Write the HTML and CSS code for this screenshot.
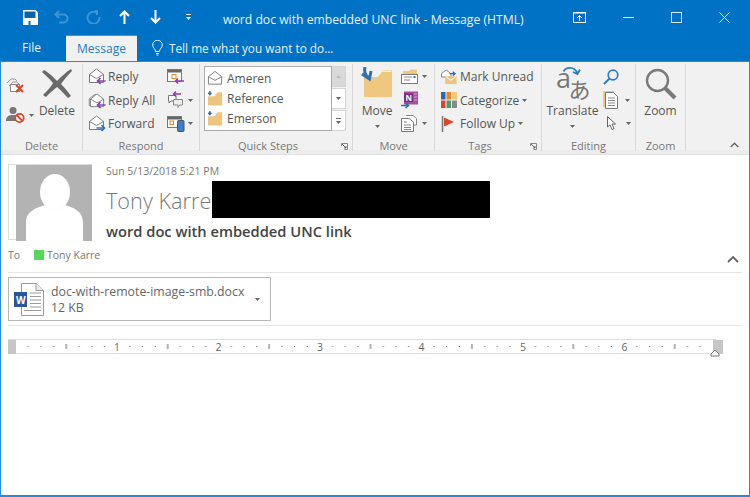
FILE: index.html
```html
<!DOCTYPE html>
<html lang="en">
<head>
<meta charset="utf-8">
<title>word doc with embedded UNC link - Message (HTML)</title>
<link rel="stylesheet" href="styles.css">
</head>
<body>
<svg class="defs" width="0" height="0" aria-hidden="true">
  <defs>
    <symbol id="env" viewBox="0 0 18 17">
      <path d="M1.5 6.5 8.5 1 15.5 6.5V14.500H1.5Z" fill="#fff" stroke="#7b7b7b"/>
      <path d="M1.5 6.5 8.5 10.500 15.5 6.5" fill="none" stroke="#7b7b7b"/>
    </symbol>
    <symbol id="folder" viewBox="0 0 18 17">
      <path d="M1 6H8L11 2H16V16H1Z" fill="#edc57e"/>
      <path d="M3 0.5V4M1.3 2.5 3 4.500 4.700 2.500" fill="none" stroke="#2f6fb3" stroke-width="1.500"/>
    </symbol>
    <symbol id="arrow-purple" viewBox="0 0 10 8">
      <path d="M9.500 4H1.500M4.500 1 1.500 4 4.500 7" fill="none" stroke="#8b3fb0" stroke-width="1.600"/>
    </symbol>
    <symbol id="caret" viewBox="0 0 5 3">
      <path d="M0 0H5L2.500 3Z" fill="#666"/>
    </symbol>
    <symbol id="launcher" viewBox="0 0 7 7">
      <path d="M.5 3V.5H6.500V6.500H3.500" fill="none" stroke="#888"/>
      <path d="M1 1 5 5M3 5H5V3" fill="none" stroke="#666"/>
    </symbol>
    <pattern id="marks" x="15.600" y="0" width="101.400" height="15" patternUnits="userSpaceOnUse">
      <rect x="12.300" y="7" width="1" height="1" fill="#666"/>
      <rect x="25" y="7" width="1" height="1" fill="#666"/>
      <rect x="37.700" y="7" width="1" height="1" fill="#666"/>
      <rect x="50.200" y="5" width="1" height="5" fill="#666"/>
      <rect x="63" y="7" width="1" height="1" fill="#666"/>
      <rect x="75.700" y="7" width="1" height="1" fill="#666"/>
      <rect x="88.300" y="7" width="1" height="1" fill="#666"/>
    </pattern>
  </defs>
</svg>
<div class="window">
  <header class="titlebar">
    <div class="qat">
      <svg class="qat-save" width="15" height="15" viewBox="0 0 15 15"><path d="M0 0H12.500L15 2.500V15H0Z" fill="#fff"/><rect x="1.500" y="1.500" width="11" height="6.500" fill="#0b62a8"/><rect x="5.500" y="11" width="2" height="4" fill="#0072c6"/></svg>
      <svg class="qat-dim" width="15" height="14" viewBox="0 0 15 14"><path d="M5 1 1.500 4.500 5 8M2 4.500H9.500A4 4 0 0 1 9.500 12.500H5" fill="none" stroke="#3f93d2" stroke-width="2"/></svg>
      <svg class="qat-dim" width="15" height="14" viewBox="0 0 15 14"><path d="M10.500 2.500A6 6 0 1 0 13.500 7" fill="none" stroke="#3f93d2" stroke-width="2"/><path d="M9 1H11V5" fill="none" stroke="#3f93d2" stroke-width="2"/></svg>
      <svg class="qat-arrow" width="11" height="14" viewBox="0 0 11 14"><path d="M5.500 14V2M1 6 5.500 1.500 10 6" fill="none" stroke="#fff" stroke-width="2"/></svg>
      <svg class="qat-arrow" width="11" height="14" viewBox="0 0 11 14"><path d="M5.500 0V12M1 8 5.500 12.500 10 8" fill="none" stroke="#fff" stroke-width="2"/></svg>
      <svg class="qat-more" width="5" height="6" viewBox="0 0 5 6"><path d="M0 .5H5" stroke="#fff"/><path d="M0 3H5L2.500 6Z" fill="#fff"/></svg>
    </div>
    <div class="title">word doc with embedded UNC link - Message (HTML)</div>
    <div class="winctl">
      <svg width="13" height="11" viewBox="0 0 13 11"><rect x=".5" y=".5" width="12" height="10" fill="none" stroke="#fff"/><path d="M0 .5H13" stroke="#fff" stroke-width="2"/><path d="M6.500 9V3.500M4 6 6.500 3.500 9 6" fill="none" stroke="#fff"/></svg>
      <svg width="11" height="11" viewBox="0 0 11 11"><path d="M0 5.500H11" stroke="#dcecf8"/></svg>
      <svg width="11" height="11" viewBox="0 0 11 11"><rect x=".5" y=".5" width="10" height="10" fill="none" stroke="#dcecf8"/></svg>
      <svg width="11" height="11" viewBox="0 0 11 11"><path d="M.5 .5 10.500 10.500M10.500 .5 .5 10.500" stroke="#dcecf8"/></svg>
    </div>
  </header>
  <nav class="tabs">
    <span class="tab">File</span>
    <span class="tab tab-active">Message</span>
    <span class="tell">
      <svg width="11" height="16" viewBox="0 0 11 16"><path d="M3.500 11.500C3.500 8.500 .7 8 .7 5A4.800 4.800 0 0 1 10.300 5C10.300 8 7.500 8.500 7.500 11.500ZM4 13.500H7M4.500 15H6.500" fill="none" stroke="#e8f2fa"/></svg>
      Tell me what you want to do...
    </span>
  </nav>

  <section class="ribbon">
    <div class="group g-delete">
      <div class="group-body">
        <div class="col-icons">
          <svg width="18" height="16" viewBox="0 0 18 16"><path d="M1 6 5 2H9L11 4M3 9 7 5H11L13 7" fill="none" stroke="#999"/><rect x="4.500" y="7.500" width="9" height="7" fill="#fff" stroke="#888"/><path d="M10 8 17 15M17 8 10 15" stroke="#d9472b" stroke-width="2"/></svg>
          <span class="with-caret">
            <svg width="20" height="18" viewBox="0 0 20 18"><circle cx="7" cy="4.500" r="3.500" fill="#777"/><path d="M0 15C0 10 3 9 7 9S12 10 12 15Z" fill="#777"/><circle cx="13.500" cy="12" r="4.200" fill="#fff" stroke="#d9472b" stroke-width="1.800"/><path d="M10.500 9 16.500 15" stroke="#d9472b" stroke-width="1.800"/></svg>
            <svg class="caret" width="5" height="3"><use href="#caret"/></svg>
          </span>
        </div>
        <div class="big big-delete">
          <svg width="32" height="30" viewBox="0 0 32 30"><path d="M3 2C10 6 14 11 16 13 20 9 25 4 30 1L31 3C26 8 22 13 20 16 24 20 27 24 30 28L27 30C23 26 20 22 16 19 12 22 8 26 5 29L2 27C6 23 10 19 12 15 9 11 5 8 1 4Z" fill="#6a6a6a"/></svg>
          <span>Delete</span>
        </div>
      </div>
      <div class="group-label">Delete</div>
    </div>

    <div class="group g-respond">
      <div class="group-body">
        <div class="col-rows col-respond">
          <div class="row"><span class="ic"><svg width="18" height="17"><use href="#env"/></svg><svg class="ic-arrow" width="10" height="8"><use href="#arrow-purple"/></svg></span>Reply</div>
          <div class="row"><span class="ic"><svg class="ic-back" width="15" height="15"><use href="#env"/></svg><svg class="ic-front" width="17" height="16"><use href="#env"/></svg><svg class="ic-arrow" width="10" height="8"><use href="#arrow-purple"/></svg></span>Reply All</div>
          <div class="row"><span class="ic"><svg width="18" height="17"><use href="#env"/></svg><svg class="ic-arrow" width="10" height="8" viewBox="0 0 10 8"><path d="M.5 4H8.500M5.500 1 8.500 4 5.500 7" fill="none" stroke="#2f6fb3" stroke-width="1.600"/></svg></span>Forward</div>
        </div>
        <div class="col-rows">
          <div class="row"><svg width="18" height="16" viewBox="0 0 18 16"><rect x=".5" y=".5" width="14" height="12" fill="#fff" stroke="#777"/><rect x="1" y="1" width="13" height="2.500" fill="#666"/><rect x="5" y="5.500" width="4" height="4" fill="#fff" stroke="#e8862c"/><path d="M17 12H8.500M11 9.500 8.500 12 11 14.500" fill="none" stroke="#8b3fb0" stroke-width="1.500"/></svg></div>
          <div class="row"><svg width="18" height="18" viewBox="0 0 18 18"><path d="M1.500 4.500H9V10H4L2 12V10H1.500Z" fill="#fff" stroke="#777"/><path d="M6.500 8.500H15.500V14H12.500L11 16.500V14H6.500Z" fill="#eee" stroke="#888"/><path d="M14 3H6.500M9 .5 6.500 3 9 5.500" fill="none" stroke="#8b3fb0" stroke-width="1.500"/></svg><svg class="caret" width="5" height="3"><use href="#caret"/></svg></div>
          <div class="row"><svg width="18" height="16" viewBox="0 0 18 16"><rect x=".5" y=".5" width="14" height="11" fill="#fff" stroke="#777"/><rect x="1" y="1" width="13" height="2.500" fill="#666"/><rect x="3" y="5" width="3.500" height="3.500" fill="#fff" stroke="#e8862c"/><rect x="10.500" y="4.500" width="6.500" height="11" rx="1" fill="#3b7fc4" stroke="#555"/></svg><svg class="caret" width="5" height="3"><use href="#caret"/></svg></div>
        </div>
      </div>
      <div class="group-label">Respond</div>
    </div>

    <div class="group g-quick">
      <div class="group-body">
        <div class="qs">
          <div class="qs-list">
            <div class="qs-item"><svg width="17" height="17"><use href="#env"/></svg>Ameren</div>
            <div class="qs-item"><svg width="17" height="17"><use href="#folder"/></svg>Reference</div>
            <div class="qs-item"><svg width="17" height="17"><use href="#folder"/></svg>Emerson</div>
          </div>
          <div class="qs-scroll">
            <span class="qs-up"><svg width="5" height="3" viewBox="0 0 5 3"><path d="M0 3H5L2.500 0Z" fill="#bbb"/></svg></span>
            <span class="qs-down"><svg width="5" height="3"><use href="#caret"/></svg></span>
            <span class="qs-more"><svg width="5" height="6" viewBox="0 0 5 6"><path d="M0 .5H5" stroke="#666"/><path d="M0 3H5L2.500 6Z" fill="#666"/></svg></span>
          </div>
        </div>
      </div>
      <div class="group-label has-launcher">Quick Steps<svg class="launcher" width="7" height="7"><use href="#launcher"/></svg></div>
    </div>

    <div class="group g-move">
      <div class="group-body">
        <div class="big big-move">
          <svg width="32" height="30" viewBox="0 0 32 30"><path d="M3 10H17L22 3H31V30H3Z" fill="#efc77f"/><path d="M22 3.500H30.500V5H21Z" fill="#fbf1dd"/><path d="M4 0C3 4 4 8 8 11M1 7 8.500 12 10 4" fill="none" stroke="#2f6fb3" stroke-width="3"/></svg>
          <span>Move</span>
          <svg class="caret big-caret" width="5" height="3"><use href="#caret"/></svg>
        </div>
        <div class="col-rows">
          <div class="row"><svg width="18" height="16" viewBox="0 0 18 16"><path d="M2 2H8L10 0.500H16V5H2Z" fill="#efc77f"/><rect x=".5" y="5.500" width="16" height="9" fill="#fff" stroke="#777"/><path d="M3 8H11M3 11H9" stroke="#888"/><rect x="12.500" y="7" width="2" height="2" fill="#2f6fb3"/></svg><svg class="caret" width="5" height="3"><use href="#caret"/></svg></div>
          <div class="row"><svg width="18" height="18" viewBox="0 0 18 18"><rect x="3" y=".5" width="14" height="13" fill="#a64fa0"/><rect x="3" y="2.500" width="9" height="8.500" fill="#7b2a83"/><text class="onenote" x="4.500" y="9.800">N</text><path d="M13 3H16M13 6H16M13 9H16" stroke="#d9a6d4"/><path d="M0 14.500H7M4.500 12 7.500 14.500 4.500 17" fill="none" stroke="#2f6fb3" stroke-width="1.600"/></svg></div>
          <div class="row"><svg width="18" height="17" viewBox="0 0 18 17"><path d="M5 .5H12L15.500 3.500V10H13" fill="#fff" stroke="#888"/><path d="M.5 3.500H8L12.500 7V16.500H.5Z" fill="#fff" stroke="#777"/><path d="M3 7H6M3 10H10M3 12.500H10M3 14.500H10" stroke="#888"/></svg><svg class="caret" width="5" height="3"><use href="#caret"/></svg></div>
        </div>
      </div>
      <div class="group-label">Move</div>
    </div>

    <div class="group g-tags">
      <div class="group-body">
        <div class="col-rows col-tags">
          <div class="row"><svg width="16" height="16" viewBox="0 0 17 16"><path d="M.5 4.500 5.500 .5 10.500 4.500V8H.5Z" fill="#fff" stroke="#7b7b7b"/><rect x="4.500" y="7" width="12" height="8.500" fill="#edc57e"/><path d="M5 7.500 10.500 11.500 16 7.500" fill="none" stroke="#fff"/><path d="M9 4.500H14.500M12.500 2.500 15 4.500 12.500 6.500" fill="none" stroke="#2f6fb3" stroke-width="1.400"/></svg>Mark Unread</div>
          <div class="row"><svg width="16" height="16" viewBox="0 0 16 16"><rect width="4.500" height="7.500" fill="#2e68ad"/><rect x="5.500" width="4.500" height="7.500" fill="#e8862c"/><rect x="11" width="5" height="7.500" fill="#efc77f"/><rect y="8.500" width="4.500" height="7.500" fill="#d9472b"/><rect x="5.500" y="8.500" width="4.500" height="7.500" fill="#4f9a6b"/><rect x="11" y="8.500" width="5" height="7.500" fill="#8a8a8a"/></svg>Categorize<svg class="caret" width="5" height="3"><use href="#caret"/></svg></div>
          <div class="row"><svg width="16" height="16" viewBox="0 0 16 16"><path d="M1.500 0V16" stroke="#777" stroke-width="1.500"/><path d="M3 1.500 13 6 3 10.500Z" fill="#d9472b"/></svg>Follow Up<svg class="caret" width="5" height="3"><use href="#caret"/></svg></div>
        </div>
      </div>
      <div class="group-label has-launcher">Tags<svg class="launcher" width="7" height="7"><use href="#launcher"/></svg></div>
    </div>

    <div class="group g-edit">
      <div class="group-body">
        <div class="big big-translate">
          <svg class="translate-ic" width="36" height="34" viewBox="0 0 36 34"><text class="tr-a" x="0" y="22">a</text><text class="tr-j" x="12.500" y="32">あ</text><path d="M7.500 5.500C10 .8 18 0 21.500 7M24 3.500 21.500 8 17 6" fill="none" stroke="#2f7cc4" stroke-width="1.800"/></svg>
          <span>Translate</span>
          <svg class="caret big-caret" width="5" height="3"><use href="#caret"/></svg>
        </div>
        <div class="col-rows col-edit">
          <div class="row"><svg width="16" height="16" viewBox="0 0 16 16"><circle cx="10" cy="6" r="4.800" fill="none" stroke="#2f7cc4" stroke-width="1.700"/><path d="M6.500 9.500 1 15" stroke="#2f7cc4" stroke-width="2"/></svg></div>
          <div class="row"><svg width="16" height="18" viewBox="0 0 16 18"><rect x="0" y="0" width="11" height="16" fill="#efc77f"/><path d="M2.500 1.500H10.500L14.500 5.500V17.500H2.500Z" fill="#fff" stroke="#777"/><path d="M5 7H12M5 9.500H12M5 12H12M5 14.500H12" stroke="#888"/></svg><svg class="caret" width="5" height="3"><use href="#caret"/></svg></div>
          <div class="row"><svg class="cursor-ic" width="16" height="15" viewBox="0 0 16 15"><path d="M3.500 .5V11L6 8.800 8 13.500 10 12.500 8 8H11.500Z" fill="#fff" stroke="#666"/></svg><svg class="caret" width="5" height="3"><use href="#caret"/></svg></div>
        </div>
      </div>
      <div class="group-label">Editing</div>
    </div>

    <div class="group g-zoom">
      <div class="group-body">
        <div class="big big-zoom">
          <svg width="32" height="32" viewBox="0 0 32 32"><circle cx="12.500" cy="12.500" r="10.500" fill="none" stroke="#7a7a7a" stroke-width="2.400"/><path d="M20 20 30 30" stroke="#7a7a7a" stroke-width="4"/></svg>
          <span>Zoom</span>
        </div>
      </div>
      <div class="group-label">Zoom</div>
    </div>

    <div class="collapse"><svg width="9" height="6" viewBox="0 0 9 6"><path d="M.7 5 4.500 1.300 8.300 5" fill="none" stroke="#666" stroke-width="1.400"/></svg></div>
  </section>

  <main class="message">
    <div class="msg-head">
      <div class="avatar">
        <svg width="76" height="76" viewBox="0 0 76 76"><rect width="76" height="76" fill="#b3b3b3"/><ellipse cx="39" cy="27" rx="15" ry="18" fill="#fff"/><path d="M10 76V58C10 46 20 43 29 40 34 46 44 46 49 40 58 43 67 46 67 58V76Z" fill="#fff"/></svg>
      </div>
      <div class="msg-meta">
        <div class="msg-date">Sun 5/13/2018 5:21 PM</div>
        <div class="msg-from"><span class="msg-name">Tony Karre</span><span class="redact"></span></div>
        <div class="msg-subject">word doc with embedded UNC link</div>
      </div>
    </div>
    <div class="msg-to">
      <span class="to-label">To</span>
      <span class="presence"></span>
      <span>Tony Karre</span>
      <svg class="to-chevron" width="12" height="8" viewBox="0 0 12 8"><path d="M1 7 6 2 11 7" fill="none" stroke="#666" stroke-width="1.800"/></svg>
    </div>
    <div class="attach-bar">
      <div class="attach">
        <svg width="30" height="33" viewBox="0 0 30 33"><path d="M7.500 .5H22L29.500 7.500V32.500H7.500Z" fill="#fff" stroke="#999"/><path d="M22 .5V7.500H29.500" fill="#eee" stroke="#999"/><path d="M16 10H27M16 13.500H27M16 17H27M16 20.500H27M16 24H27M10 27.500H27" stroke="#999"/><rect y="9" width="13" height="15" fill="#2b579a"/><text class="word-w" x="2" y="20.500">W</text></svg>
        <div class="attach-text">
          <div class="attach-name">doc-with-remote-image-smb.docx</div>
          <div class="attach-size">12 KB</div>
        </div>
        <svg class="caret attach-caret" width="5" height="3"><use href="#caret"/></svg>
      </div>
    </div>
    <svg class="ruler" width="716" height="17" viewBox="8 0 716 17" role="img" aria-label="Ruler">
      <rect x="8" y="1" width="708" height="14" fill="#fff"/>
      <path d="M8 .5H716M8 14.500H716" stroke="#dcdcdc"/>
      <rect x="8" y="1" width="8" height="14" fill="#c6c6c6"/>
      <rect x="16" y="0" width="690" height="15" fill="url(#marks)"/>
      <g class="ruler-num">
        <text x="117" y="11.500">1</text><text x="218.500" y="11.500">2</text><text x="320" y="11.500">3</text>
        <text x="421.500" y="11.500">4</text><text x="523" y="11.500">5</text><text x="624.500" y="11.500">6</text>
      </g>
      <rect x="713" y="1" width="10" height="14" fill="#c6c6c6"/>
      <path d="M715 11 719 15V17H711V15Z" fill="#fff" stroke="#777"/>
    </svg>
  </main>
</div>
</body>
</html>
```
FILE: styles.css
```css
* { box-sizing: border-box; }
html, body { margin: 0; padding: 0; }
body {
  width: 750px;
  height: 497px;
  overflow: hidden;
  background: #fff;
  font-family: "Open Sans", "Noto Sans", sans-serif;
  color: #555;
}
.defs { position: absolute; }
svg { display: block; flex: none; }

.window {
  width: 750px;
  height: 497px;
  display: flex;
  flex-direction: column;
  border: 1px solid #2a8ad8;
  border-top: 0;
  border-bottom-width: 2px;
}

.titlebar {
  height: 35px;
  margin: 0 -1px;
  background: #0072c6;
  display: flex;
  color: #eaf3fb;
}
.qat {
  width: 223px;
  padding: 10px 0 0 23px;
  display: flex;
  align-items: flex-start;
}
.qat-dim { margin-left: 16px; }
.qat-dim + .qat-dim { margin-left: 17px; }
.qat-arrow { margin-left: 18px; }
.qat-arrow + .qat-arrow { margin-left: 20px; }
.qat-more { margin: 4px 0 0 25px; }
.title { flex: 1; font-size: 12.200px; line-height: 39px; white-space: nowrap; }
.winctl {
  display: flex;
  gap: 37px;
  padding: 12px 20px 0 0;
  align-items: flex-start;
}

.tabs {
  height: 26px;
  margin: 0 -1px;
  background: #0072c6;
  display: flex;
  align-items: stretch;
  font-size: 12px;
  color: #e8f2fa;
  line-height: 26px;
}
.tab { padding: 0 25px 0 22px; }
.tab-active {
  width: 71px;
  padding: 0;
  text-align: center;
  background: #f1f1f1;
  color: #1c7cc8;
  border-top: 1px solid #3e97d8;
}
.tell { margin-left: 15px; display: flex; align-items: center; gap: 6px; font-size: 11.800px; }

.ribbon {
  height: 94px;
  background: #f1f1f1;
  border-top: 1px solid #2a8ad8;
  border-bottom: 1px solid #e2e2e2;
  box-shadow: inset 0 -4px 0 #ececec;
  display: flex;
  padding-top: 2px;
  font-size: 12px;
  color: #555;
  position: relative;
}
.group {
  height: 87px;
  display: flex;
  flex-direction: column;
  border-right: 1px solid #d8d8d8;
  position: relative;
}
.group-body { flex: 1; display: flex; min-height: 0; }
.group-label {
  height: 12px;
  line-height: 13px;
  text-align: center;
  font-size: 11px;
  color: #777;
}
.has-launcher { padding-right: 16px; }
.launcher { position: absolute; right: 4px; bottom: 1px; }
.g-delete { width: 82px; }
.g-respond { width: 117px; }
.g-quick { width: 153px; }
.g-move { width: 82px; }
.g-tags { width: 107px; }
.g-edit { width: 94px; }
.g-zoom { width: 50px; }

.caret { flex: none; margin-left: 3px; }

.col-icons {
  width: 36px;
  padding: 13px 0 0 5px;
  display: flex;
  flex-direction: column;
  gap: 13px;
}
.with-caret { display: flex; align-items: center; gap: 2px; }
.with-caret .caret { margin-left: 1px; }

.big { display: flex; flex-direction: column; align-items: center; line-height: 16px; }
.big-delete { padding-top: 4px; width: 40px; }
.big-delete span { margin-top: 5px; }
.big-move { width: 48px; padding-top: 3px; }
.big-move span { margin-top: 6px; }
.big-caret { margin: 6px 0 0; }
.big-translate { width: 59px; margin-left: 1px; padding-top: 2px; }
.big-translate span { margin-top: 3px; }
.translate-ic { margin-left: 2px; overflow: visible; }
.big-zoom { width: 50px; padding-top: 4px; }
.big-zoom span { margin-top: 3px; }

.col-rows { display: flex; flex-direction: column; padding-top: 1px; }
.row { height: 23.500px; display: flex; align-items: center; white-space: nowrap; }
.col-respond { width: 84px; padding-left: 5px; }
.col-tags { padding-left: 6px; }
.col-tags .row > svg:first-child { margin-right: 3px; }
.col-edit { padding-left: 1px; }
.col-edit .caret { margin-left: 6px; }
.cursor-ic { margin-left: 1px; }
.ic { position: relative; display: block; width: 18px; height: 17px; margin-right: 2px; }
.ic-arrow { position: absolute; left: 8px; bottom: 0; }
.ic-back { position: absolute; left: 0; top: 1px; }
.ic-front { position: absolute; left: 1px; top: 1px; }

.qs { display: flex; margin: 2px 0 0 4px; height: 65px; width: 142px; }
.qs-list {
  width: 128px;
  background: #fff;
  border: 1px solid #ababab;
  padding: 1px 0 0 2px;
}
.qs-item { height: 20.300px; display: flex; align-items: center; gap: 3px; }
.qs-scroll { width: 14px; display: flex; flex-direction: column; gap: 1px; }
.qs-scroll span { display: flex; align-items: center; justify-content: center; flex: 1; background: #fff; border: 1px solid #d4d4d4; border-left: 0; }
.qs-scroll .qs-up { background: #d9d9d9; }

.collapse { position: absolute; right: 10px; bottom: 6px; }

.message { flex: 1; padding: 0 7px; position: relative; }
.msg-head { display: flex; padding-top: 9px; height: 88px; }
.avatar { width: 84px; height: 76px; border: 1px solid #dcdcdc; border-right: 0; display: flex; justify-content: flex-end; }
.msg-meta { margin-left: 14px; }
.msg-date { font-size: 10.500px; line-height: 14px; color: #777; }
.msg-from { display: flex; height: 37px; margin-top: 3px; align-items: center; }
.msg-name { font-size: 21.700px; font-weight: 300; color: #777; white-space: nowrap; width: 106px; padding-top: 2px; }
.redact { display: block; width: 278px; height: 37px; background: #000; }
.msg-subject { font-size: 14.700px; font-weight: 600; line-height: 20px; margin-top: 3px; color: #444; white-space: nowrap; }
.msg-to {
  height: 28px;
  margin-top: 2px;
  display: flex;
  align-items: center;
  font-size: 10.500px;
  color: #777;
  padding-bottom: 8px;
  border-bottom: 1px solid #e6e6e6;
}
.to-label { width: 26px; }
.presence { width: 10px; height: 10px; background: #58d858; margin-right: 3px; }
.to-chevron { margin: 8px 3px 0 auto; }
.attach-bar { height: 53px; padding-top: 4px; border-bottom: 1px solid #e6e6e6; }
.attach {
  width: 263px;
  height: 44px;
  border: 1px solid #b8b8b8;
  display: flex;
  align-items: center;
  padding-left: 5px;
}
.attach-text { margin: 2px 0 0 7px; font-size: 12.300px; line-height: 16px; color: #666; white-space: nowrap; }
.attach-caret { margin-left: 11px; }
.ruler { margin-top: 13px; overflow: visible; }
.ruler-num text { font-size: 10.500px; fill: #666; text-anchor: middle; font-family: "Open Sans", sans-serif; }
.tr-a { font-size: 27px; fill: #777; font-family: "Open Sans", sans-serif; }
.tr-j { font-size: 22px; fill: #777; font-family: "Noto Sans CJK JP", sans-serif; }
.onenote { font-size: 8px; font-weight: 700; fill: #fff; font-family: "Open Sans", sans-serif; }
.word-w { font-size: 10px; font-weight: 700; fill: #fff; font-family: "Open Sans", sans-serif; }
```
